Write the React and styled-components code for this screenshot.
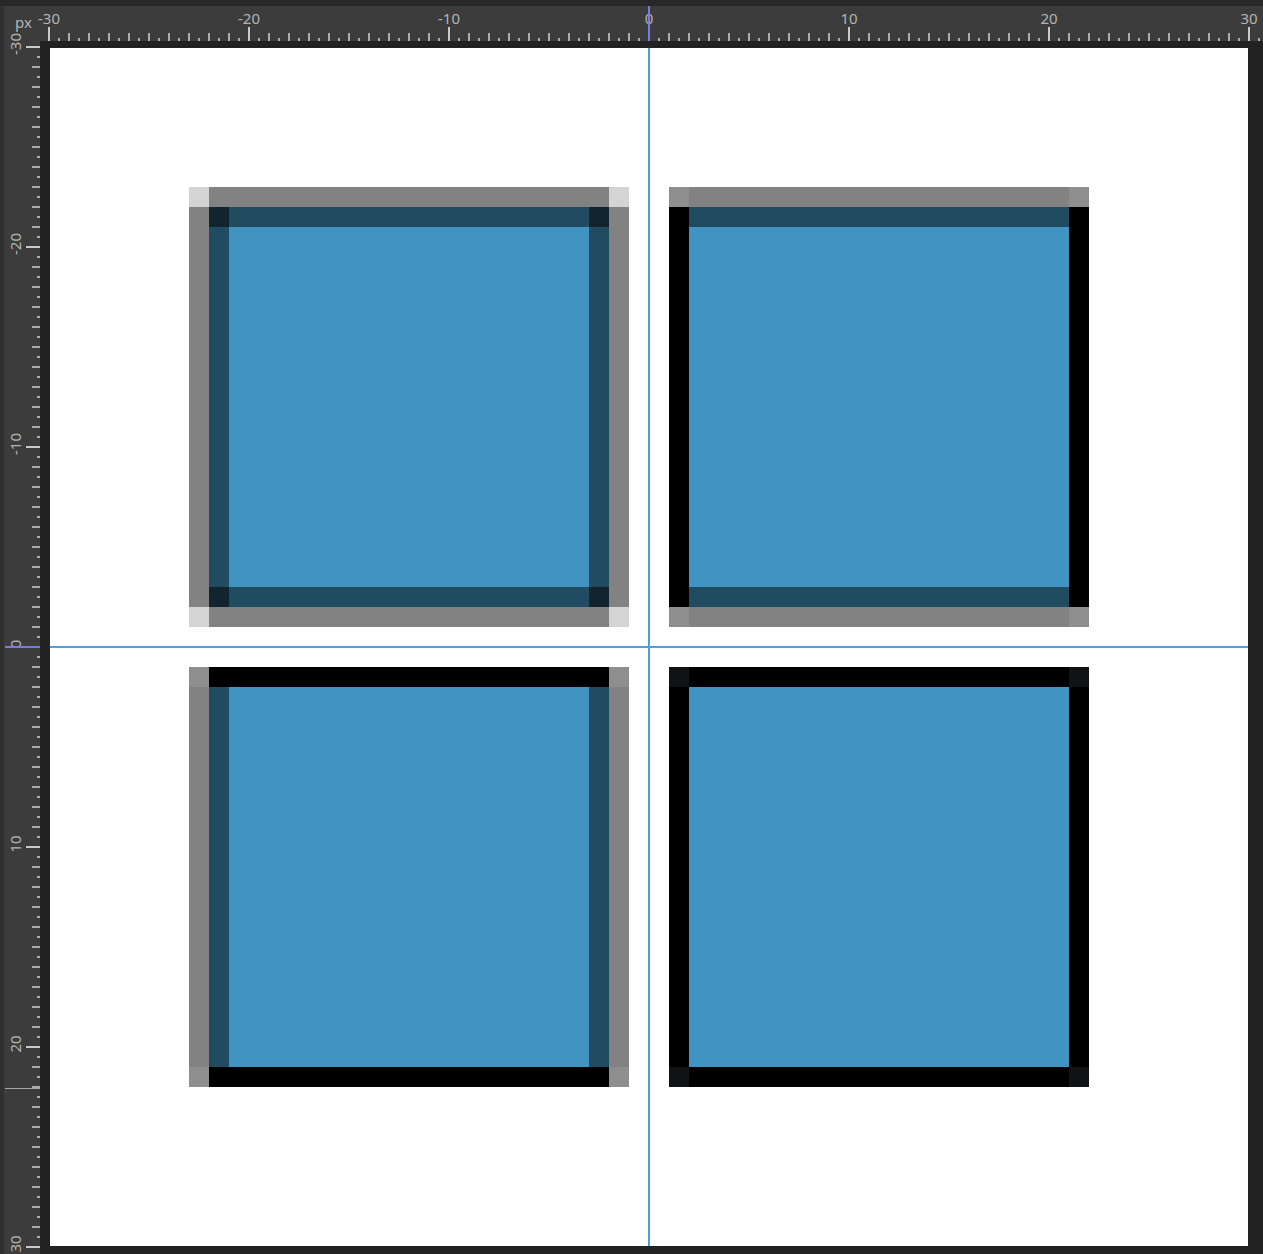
import React from 'react';
import styled, { createGlobalStyle } from 'styled-components';

const CELL = 20;
const ORIGIN = 599; // canvas px of unit 0

const colors = {
  blue: '#4194c1',
  darkBlue: '#214b61',
  deepBlue: '#12252f',
  gray: '#828282',
  lightGray: '#d4d4d4',
  midGray: '#8e8e8e',
  black: '#000000',
  nearBlack: '#111213',
  axis: '#48a0e2',
  guide: '#7a7ae6',
};

const Global = createGlobalStyle`
  html, body {
    margin: 0;
    padding: 0;
    background: #222222;
  }
  body {
    font-family: "Noto Sans", "Open Sans", sans-serif;
    overflow: hidden;
  }
`;

const Frame = styled.div`
  display: grid;
  grid-template-columns: 4px 36px 1223px;
  grid-template-rows: 6px 35px 1213px;
  width: 1263px;
  height: 1254px;
`;

const TopBar = styled.div`
  grid-column: 1 / 4;
  background: #272727;
`;

const SideStrip = styled.div`
  grid-column: 1;
  grid-row: 2 / 4;
  background: #303030;
`;

const Corner = styled.div`
  grid-column: 2;
  grid-row: 2;
  background: #3c3c3c;
  display: flex;
  padding: 9px 0 0 11px;
  box-sizing: border-box;
`;

const UnitLabel = styled.span`
  font-size: 15px;
  line-height: 15px;
  color: #b4b4b4;
`;

const HRuler = styled.div`
  grid-column: 3;
  grid-row: 2;
  background: #3c3c3c;
`;

const VRuler = styled.div`
  grid-column: 2;
  grid-row: 3;
  background: #3c3c3c;
`;

const RulerSvg = styled.svg`
  display: block;
  overflow: visible;
  font-family: "Noto Sans", "Open Sans", sans-serif;
`;

const Workspace = styled.div`
  grid-column: 3;
  grid-row: 3;
  background: #222222;
  padding: 7px 15px 8px 10px;
  box-sizing: border-box;
`;

const Canvas = styled.div`
  width: 1198px;
  height: 1198px;
  background: #ffffff;
`;

const halfSteps = [];
for (let k = -60; k <= 61; k++) halfSteps.push(k);

const tickLen = (k) => (k % 20 === 0 ? 14 : k % 2 === 0 ? 8 : 3);
const tickColor = (k) => (k % 20 === 0 ? '#cacaca' : '#acacac');
const labels = [-30, -20, -10, 0, 10, 20, 30];

const TopRuler = () => (
  <RulerSvg width="1223" height="35" shapeRendering="crispEdges">
    {halfSteps.map((k) => (
      <rect key={k} x={609 + 10 * k - 1} y={35 - tickLen(k)} width="2" height={tickLen(k)} fill={tickColor(k)} />
    ))}
    {labels.map((u) => (
      <text key={u} x={609 + 20 * u} y="17.5" fontSize="15" fill="#b4b4b4" textAnchor="middle" shapeRendering="auto">
        {u}
      </text>
    ))}
    <rect x="608" y="0" width="2" height="35" fill={colors.guide} />
  </RulerSvg>
);

const LeftRuler = () => (
  <RulerSvg width="36" height="1213" shapeRendering="crispEdges">
    {halfSteps.slice(0, 121).map((k) => (
      <rect key={k} x={36 - tickLen(k)} y={606 + 10 * k - 1} width={tickLen(k)} height="2" fill={tickColor(k)} />
    ))}
    {labels.map((u) => (
      <text
        key={u}
        transform={`translate(17, ${606 + 20 * u - 3}) rotate(-90)`}
        fontSize="15"
        fill="#b4b4b4"
        textAnchor="middle"
        shapeRendering="auto"
      >
        {u}
      </text>
    ))}
    <rect x="1" y="1047" width="35" height="1" fill="#a8a8a8" />
    <rect x="1" y="605" width="35" height="2" fill={colors.guide} />
  </RulerSvg>
);

// a block of pixels in unit coordinates
const cell = (ux, uy, w, h, fill) => ({ ux, uy, w, h, fill });

const corners = (x, y, w, h, fill) => [
  cell(x, y, 1, 1, fill),
  cell(x + w - 1, y, 1, 1, fill),
  cell(x, y + h - 1, 1, 1, fill),
  cell(x + w - 1, y + h - 1, 1, 1, fill),
];

const squareA = (x, y, w, h) => [
  cell(x, y, w, h, colors.gray),
  ...corners(x, y, w, h, colors.lightGray),
  cell(x + 1, y + 1, w - 2, h - 2, colors.darkBlue),
  ...corners(x + 1, y + 1, w - 2, h - 2, colors.deepBlue),
  cell(x + 2, y + 2, w - 4, h - 4, colors.blue),
];

const squareB = (x, y, w, h) => [
  cell(x, y, w, h, colors.black),
  cell(x, y, w, 1, colors.gray),
  cell(x, y + h - 1, w, 1, colors.gray),
  ...corners(x, y, w, h, colors.midGray),
  cell(x + 1, y + 1, w - 2, h - 2, colors.darkBlue),
  cell(x + 1, y + 2, w - 2, h - 4, colors.blue),
];

const squareC = (x, y, w, h) => [
  cell(x, y, w, h, colors.gray),
  cell(x, y, w, 1, colors.black),
  cell(x, y + h - 1, w, 1, colors.black),
  ...corners(x, y, w, h, colors.midGray),
  cell(x + 1, y + 1, w - 2, h - 2, colors.darkBlue),
  cell(x + 2, y + 1, w - 4, h - 2, colors.blue),
];

const squareD = (x, y, w, h) => [
  cell(x, y, w, h, colors.black),
  ...corners(x, y, w, h, colors.nearBlack),
  cell(x + 1, y + 1, w - 2, h - 2, colors.blue),
];

const pixels = [
  ...squareA(-23, -23, 22, 22),
  ...squareB(1, -23, 21, 22),
  ...squareC(-23, 1, 22, 21),
  ...squareD(1, 1, 21, 21),
];

const Drawing = () => (
  <svg width="1198" height="1198" shapeRendering="crispEdges" style={{ display: 'block' }}>
    {pixels.map((p, i) => (
      <rect
        key={i}
        x={ORIGIN + p.ux * CELL}
        y={ORIGIN + p.uy * CELL}
        width={p.w * CELL}
        height={p.h * CELL}
        fill={p.fill}
      />
    ))}
    <rect x="598" y="0" width="2" height="1198" fill={colors.axis} />
    <rect x="0" y="598" width="1198" height="2" fill={colors.axis} />
  </svg>
);

export default function App() {
  return (
    <>
      <Global />
      <Frame>
        <TopBar />
        <SideStrip />
        <Corner>
          <UnitLabel>px</UnitLabel>
        </Corner>
        <HRuler>
          <TopRuler />
        </HRuler>
        <VRuler>
          <LeftRuler />
        </VRuler>
        <Workspace>
          <Canvas>
            <Drawing />
          </Canvas>
        </Workspace>
      </Frame>
    </>
  );
}
